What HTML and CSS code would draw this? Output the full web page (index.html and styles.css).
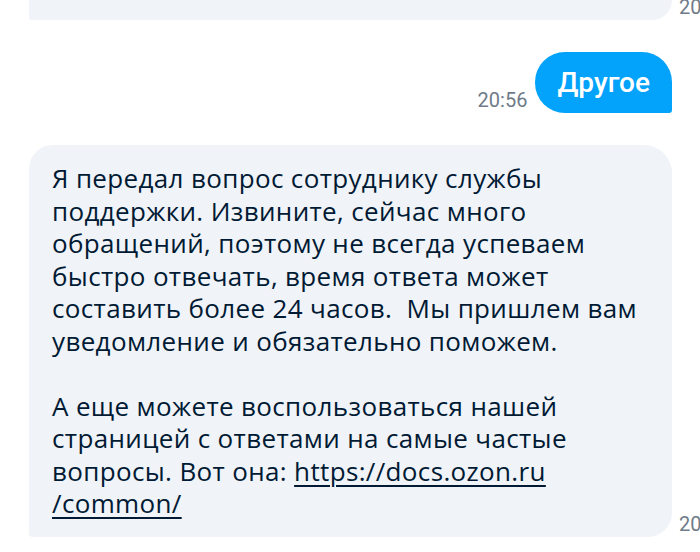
FILE: index.html
```html
<!DOCTYPE html>
<html lang="ru">
<head>
<meta charset="utf-8">
<link rel="stylesheet" href="styles.css">
</head>
<body>
<div class="chat">
  <div class="row row-in row-first">
    <div class="bubble bubble-in bubble-cut"></div>
    <span class="time">20:55</span>
  </div>
  <div class="row row-out">
    <span class="time">20:56</span>
    <div class="bubble bubble-out">Другое</div>
  </div>
  <div class="row row-in">
    <div class="bubble bubble-in">
      <p class="msg">Я передал вопрос сотруднику службы<br>поддержки. Извините, сейчас много<br>обращений, поэтому не всегда успеваем<br>быстро отвечать, время ответа может<br>составить более 24 часов.&nbsp; Мы пришлем вам<br>уведомление и обязательно поможем.</p>
      <p class="msg">А еще можете воспользоваться нашей<br>страницей с ответами на самые частые<br>вопросы. Вот она: <a class="link" href="#">https://docs.ozon.ru<br>/common/</a></p>
    </div>
    <span class="time">20:56</span>
  </div>
</div>
</body>
</html>
```

FILE: styles.css
```css
html, body {
  margin: 0;
  padding: 0;
  background: #ffffff;
  overflow: hidden;
}

.chat {
  width: 700px;
  display: flex;
  flex-direction: column;
  gap: 32px;
}

.row {
  display: flex;
  align-items: flex-end;
  white-space: nowrap;
}

.row-first {
  height: 20px;
}

.row-in {
  padding-left: 29px;
  gap: 7px;
}

.row-out {
  justify-content: flex-end;
  padding-right: 28px;
  gap: 8px;
}

.time {
  font-family: Roboto, "Liberation Sans", sans-serif;
  font-size: 20px;
  color: #6f7b88;
  line-height: 23px;
  margin-bottom: 1px;
  flex: none;
}

.bubble {
  box-sizing: border-box;
}

.bubble-in {
  width: 643px;
  flex: none;
  background: #f0f3f8;
  border-radius: 24px 28px 24px 4px;
  padding: 17px 20px 17px 23px;
}

.bubble-cut {
  height: 20px;
  padding: 0;
  border-radius: 0 0 26px 4px;
}

.bubble-out {
  height: 61px;
  flex: none;
  background: #03a2fb;
  color: #ffffff;
  font-family: Roboto, "Liberation Sans", sans-serif;
  font-weight: 500;
  font-size: 28px;
  line-height: 61px;
  padding: 0 22px;
  border-radius: 30px 30px 3px 30px;
}

.msg {
  margin: 0;
  font-family: "Open Sans", "Noto Sans", sans-serif;
  font-size: 26px;
  font-weight: 500;
  letter-spacing: 0.35px;
  line-height: 32.5px;
  color: #001a34;
}

.msg + .msg {
  margin-top: 32.5px;
}

.link {
  color: #001a34;
  text-decoration: underline;
  text-decoration-thickness: 2px;
  text-underline-offset: 4px;
}
```
